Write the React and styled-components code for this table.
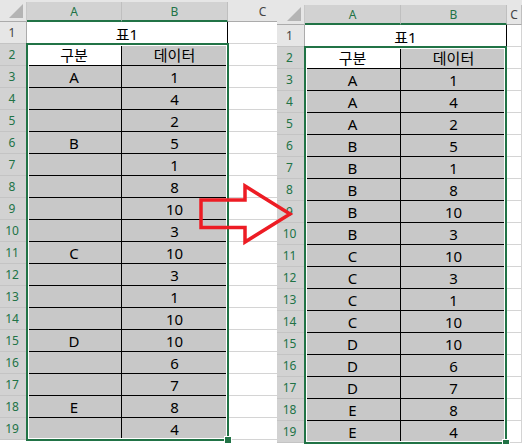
import React from "react";
import styled, { createGlobalStyle } from "styled-components";

const GREEN = "#217346";

const GlobalStyle = createGlobalStyle`
  body {
    margin: 0;
    background: #fff;
    font-family: "Noto Sans", "Noto Sans CJK KR", sans-serif;
  }
`;

const values = [1, 4, 2, 5, 1, 8, 10, 3, 10, 3, 1, 10, 10, 6, 7, 8, 4];
const before = ["A", "", "", "B", "", "", "", "", "C", "", "", "", "D", "", "", "E", ""];
const after = ["A", "A", "A", "B", "B", "B", "B", "B", "C", "C", "C", "C", "D", "D", "D", "E", "E"];

const Sheet = ({ cols, width, offset, head, labels }) => {
  return (
    <SheetWrap $width={width} $offset={offset}>
      <Grid $cols={cols}>
        <Corner />
        <ColHead $sel>A</ColHead>
        <ColHead $sel>B</ColHead>
        <ColHead>C</ColHead>

        <RowHead>1</RowHead>
        <TitleCell>표1</TitleCell>
        <Empty />

        <RowHead $sel>2</RowHead>
        <DataCell $white>구분</DataCell>
        <DataCell>데이터</DataCell>
        <Empty />

        {values.map((v, idx) => (
          <React.Fragment key={idx}>
            <RowHead $sel>{idx + 3}</RowHead>
            <DataCell>{labels[idx]}</DataCell>
            <DataCell>{v}</DataCell>
            <Empty />
          </React.Fragment>
        ))}
      </Grid>
      <Selection $left={head - 1} $top={offset + 20 + 22 - 1} $width={203}>
        <Handle />
      </Selection>
    </SheetWrap>
  );
};

const App = () => {
  return (
    <>
      <GlobalStyle />
      <Page>
        <Sheet cols="27px 95px 106px 70px" width={277} offset={2} head={27} labels={before} />
        <Sheet cols="28px 96px 106px 15px" width={245} offset={5} head={28} labels={after} />
        <Arrow width="522" height="444" viewBox="0 0 522 444">
          <polygon
            points="201,200 245,200 245,186 290,214 245,242 245,227.5 201,227.5"
            fill="none"
            stroke="#ed1c24"
            strokeWidth="3.5"
            strokeLinejoin="miter"
          />
        </Arrow>
      </Page>
    </>
  );
};

const Page = styled.div`
  position: relative;
  display: flex;
  width: 522px;
  height: 444px;
  overflow: hidden;
  background: #fff;
`;

const SheetWrap = styled.div`
  position: relative;
  flex: none;
  width: ${(p) => p.$width}px;
  height: 444px;
  overflow: hidden;
  padding-top: ${(p) => p.$offset}px;
  box-sizing: border-box;
  background: linear-gradient(#e6e6e6, #e6e6e6) top / 100% ${(p) => p.$offset}px no-repeat, #fff;
`;

const Grid = styled.div`
  display: grid;
  grid-template-columns: ${(p) => p.$cols};
  grid-template-rows: 20px;
  grid-auto-rows: 22px;
  font-size: 15px;
  color: #000;
  & > * {
    box-sizing: border-box;
  }
`;

const Corner = styled.div`
  position: relative;
  background: #e6e6e6;
  border-right: 1px solid #c8c8c8;
  border-bottom: 1px solid #ababab;
  &::after {
    content: "";
    position: absolute;
    right: 3px;
    bottom: 3px;
    width: 14px;
    height: 14px;
    background: #b4b4b4;
    clip-path: polygon(100% 0, 100% 100%, 0 100%);
  }
`;

const ColHead = styled.div`
  display: flex;
  align-items: center;
  justify-content: center;
  font-size: 12px;
  background: ${(p) => (p.$sel ? "#d2d2d2" : "#e6e6e6")};
  color: ${(p) => (p.$sel ? GREEN : "#444")};
  border-right: 1px solid #bfbfbf;
  border-bottom: ${(p) => (p.$sel ? `2px solid ${GREEN}` : "1px solid #ababab")};
`;

const RowHead = styled.div`
  display: flex;
  align-items: center;
  justify-content: center;
  font-size: 12px;
  padding-right: 2px;
  background: ${(p) => (p.$sel ? "#d2d2d2" : "#e6e6e6")};
  color: ${(p) => (p.$sel ? GREEN : "#444")};
  border-right: 1px solid #ababab;
  border-bottom: 1px solid #c4c4c4;
`;

const TitleCell = styled.div`
  grid-column: span 2;
  display: flex;
  align-items: center;
  justify-content: center;
  background: #fff;
  border-right: 1px solid #000;
`;

const DataCell = styled.div`
  display: flex;
  align-items: center;
  justify-content: center;
  background: ${(p) => (p.$white ? "#fff" : "#c8c8c8")};
  border-right: 1px solid #000;
  border-bottom: 1px solid #000;
`;

const Empty = styled.div`
  background: #fff;
  border-bottom: 1px solid #d4d4d4;
  border-right: 1px solid #d4d4d4;
`;

const Selection = styled.div`
  position: absolute;
  left: ${(p) => p.$left}px;
  top: ${(p) => p.$top}px;
  width: ${(p) => p.$width}px;
  height: 398px;
  box-sizing: border-box;
  border: 2px solid ${GREEN};
  box-shadow: inset 0 0 0 1px #fff;
  pointer-events: none;
`;

const Handle = styled.div`
  position: absolute;
  right: -5px;
  bottom: -5px;
  width: 6px;
  height: 6px;
  background: ${GREEN};
  border: 1px solid #fff;
`;

const Arrow = styled.svg`
  position: absolute;
  left: 0;
  top: 0;
  pointer-events: none;
`;

export default App;
